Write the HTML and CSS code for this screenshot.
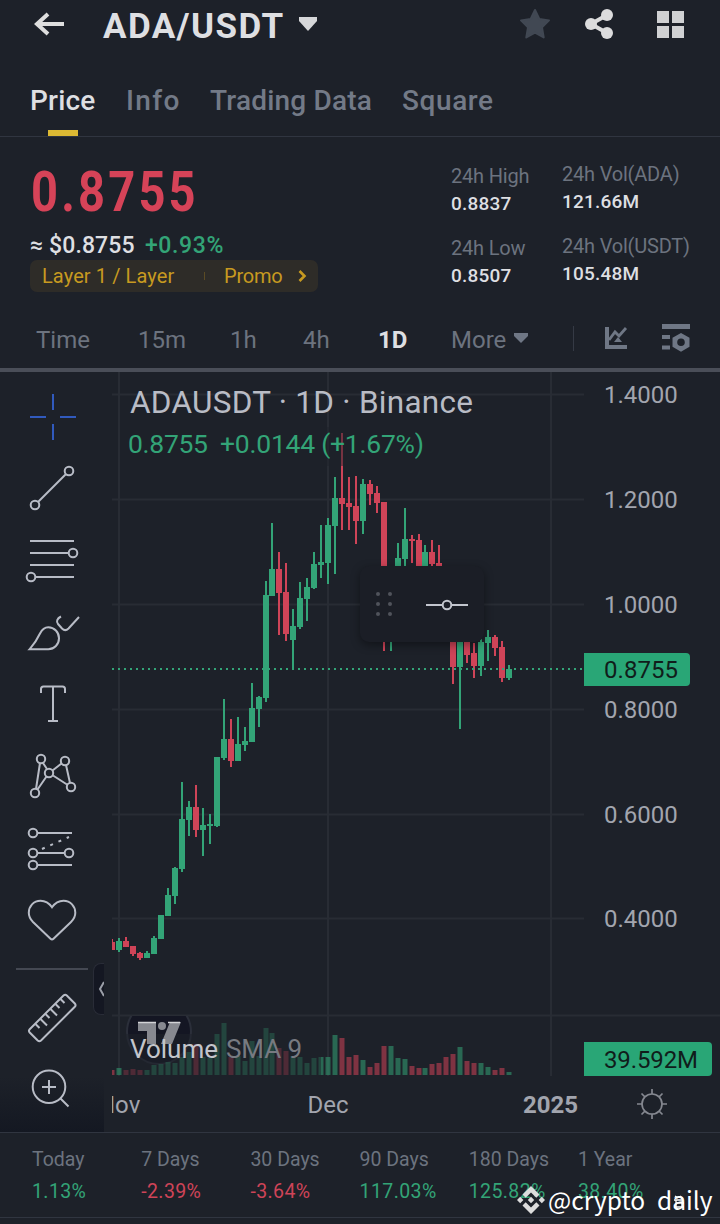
FILE: index.html
```html
<!DOCTYPE html>
<html lang="en">
<head>
  <meta charset="UTF-8">
  <meta name="viewport" content="width=device-width, initial-scale=1.0">
  <title>ADA/USDT</title>
  <link rel="stylesheet" href="styles.css">
</head>
<body>
  <header class="topbar">
    <svg class="back" width="32" height="26" viewBox="0 0 32 26"><path d="M15 3L4 13l11 10M4 13h27" fill="none" stroke="#dedede" stroke-width="4"/></svg>
    <h1>ADA/USDT</h1>
    <svg class="caret" width="20" height="16" viewBox="0 0 20 16"><path d="M1 1h18v4l-9 10L1 5z" fill="#d6d7d9"/></svg>
    <div class="actions">
      <svg width="32" height="32" viewBox="0 0 32 32"><path d="M16 2l4.300 9 9.700 1.400-7 7 1.700 10L16 24.700 7.300 29.400 9 19.400 2 12.400 11.700 11z" fill="#414853" stroke="#414853" stroke-width="2" stroke-linejoin="round"/></svg>
      <svg width="32" height="32" viewBox="0 0 32 32"><path d="M24 7L8 16l16 9" fill="none" stroke="#dcdcdd" stroke-width="4"/><g fill="#dcdcdd"><circle cx="8" cy="16" r="6"/><circle cx="24" cy="7" r="6"/><circle cx="24" cy="25" r="6"/></g></svg>
      <svg width="32" height="32" viewBox="0 0 32 32"><path d="M3 3h12v12H3zM18 3h12v12H18zM3 18h12v12H3zM18 18h12v12H18z" fill="#d0d1d3"/></svg>
    </div>
  </header>

  <nav class="tabs">
    <span class="tab active">Price</span>
    <span class="tab info">Info</span>
    <span class="tab">Trading Data</span>
    <span class="tab square">Square</span>
  </nav>

  <section class="ticker">
    <div class="price-box">
      <div class="price">0.8755</div>
      <div class="sub"><span class="usd">≈ $0.8755</span><span class="change up">+0.93%</span></div>
      <div class="promo">
        <span class="layer">Layer 1 / Layer</span>
        <i></i>
        <span class="link">Promo</span>
        <svg width="9" height="12" viewBox="0 0 9 12"><path d="M1.500 1l5 5-5 5" fill="none" stroke="#c79a20" stroke-width="2.600"/></svg>
      </div>
    </div>
    <dl class="stats">
      <div><dt>24h High</dt><dd>0.8837</dd></div>
      <div><dt>24h Low</dt><dd>0.8507</dd></div>
    </dl>
    <dl class="stats vol">
      <div><dt>24h Vol(ADA)</dt><dd>121.66M</dd></div>
      <div><dt>24h Vol(USDT)</dt><dd>105.48M</dd></div>
    </dl>
  </section>

  <nav class="intervals">
    <span>Time</span>
    <span>15m</span>
    <span>1h</span>
    <span>4h</span>
    <span class="active">1D</span>
    <span class="more">More <svg width="14" height="12" viewBox="0 0 14 12"><path d="M0 1h14v3l-7 7-7-7z" fill="#6f7785"/></svg></span>
    <i></i>
    <svg width="26" height="26" viewBox="0 0 26 26"><path d="M4 2v20h20" fill="none" stroke="#6f7785" stroke-width="4"/><path d="M6 15l6-8 4 4 7-8" fill="none" stroke="#6f7785" stroke-width="2.800"/><path d="M11 17l4-5 4 5z" fill="#6f7785"/></svg>
    <svg class="settings" width="30" height="30" viewBox="0 0 30 30"><g fill="#6f7785"><path d="M1 1h28v5H1zM1 12h8v4H1zM1 22.500h8v4H1z"/><path fill-rule="evenodd" d="M20 10l8.500 4.800v9L20 28.700l-8.500-4.900v-9zM20 15.500a3.800 3.800 0 100 7.600 3.800 3.800 0 000-7.600z"/></g></svg>
  </nav>

  <main class="chart">
    <aside class="tools">
      <svg viewBox="0 0 72 72" class="tool selected"><path d="M37 13v16M37 43v16M14 36h16M44 36h16"/></svg>
      <svg viewBox="0 0 72 72" class="tool"><path d="M22 49L50 21"/><circle cx="53" cy="18" r="4.300"/><circle cx="19" cy="52" r="4.300"/></svg>
      <svg viewBox="0 0 72 72" class="tool"><path d="M14 16h44M14 28h39M14 40h44M20 52h38"/><circle cx="57" cy="28" r="4.300"/><circle cx="15" cy="52" r="4.300"/></svg>
      <svg viewBox="0 0 72 72" class="tool"><path d="M13.500 52.300C19 46 21 43 24 36.500c2-4 5-6.200 8.300-6.200 6 0 10.700 5 10.700 11s-4.700 11-10.700 11z"/><path d="M45 19.500c-4 2-5 5-3 7.500l4 4.500c2 2 4.500 2 6.500 0L63 20"/></svg>
      <svg viewBox="0 0 72 72" class="tool"><path d="M25 24v-4q0-2.500 2.500-2.500h19q2.500 0 2.500 2.500v4M37 17.500V52M32 52h10"/></svg>
      <svg viewBox="0 0 72 72" class="tool"><path d="M24 22l-4 26M27 22l4 6M21.500 48.500L30.500 35.500M36.500 29.500l9-7M50 24l4 18M37 34.500l14 9"/><circle cx="25" cy="18" r="4.200"/><circle cx="49" cy="20" r="4.200"/><circle cx="33" cy="32" r="4.200"/><circle cx="55" cy="46" r="4.200"/><circle cx="19" cy="52" r="4.200"/></svg>
      <svg viewBox="0 0 72 72" class="tool"><path d="M21.500 20H56M21.500 40h27M21.500 52H56"/><path d="M26 36l27-12" stroke-dasharray="3 6"/><circle cx="17" cy="20" r="4.300"/><circle cx="17" cy="40" r="4.300"/><circle cx="53" cy="40" r="4.300"/><circle cx="17" cy="52" r="4.300"/></svg>
      <svg viewBox="0 0 72 72" class="tool"><path d="M36 22.300c-3-4.300-7-6.500-11.500-6.500-7 0-11.700 5.400-11.700 12 0 3.700 1.500 6.500 4.200 9.200l17.500 16.700q1.500 1.500 3 0L55 37c2.800-2.700 4.300-5.500 4.300-9.200 0-6.600-4.800-12-11.800-12-4.500 0-8.500 2.200-11.500 6.500z"/></svg>
      <hr>
      <svg viewBox="0 0 72 72" class="tool"><path d="M47.500 14.500q1.700-1.500 3.300 0l8 8q1.500 1.700 0 3.300L25 59.500q-1.700 1.500-3.300 0l-8-8q-1.500-1.700 0-3.300z"/><path d="M19.500 43l4 4M24.500 38l6.500 6.500M29.500 33l4 4M34.500 28l6.500 6.500M39.500 23l4 4M44.500 18l4 4"/></svg>
      <svg viewBox="0 0 72 72" class="tool"><circle cx="33" cy="33.700" r="16.300"/><path d="M26 34h14M33 27v14M44.500 45.500l8 8"/></svg>
      <div class="collapse"><svg width="6" height="16" viewBox="0 0 6 16"><path d="M6 1L2 8l4 7" fill="none" stroke="#9b9fa8" stroke-width="2"/></svg></div>
    </aside>

    <svg class="plot" width="616" height="760" viewBox="104 372 616 760">
      <defs>
        <clipPath id="pane"><rect x="112" y="372" width="474" height="704"/></clipPath>
        <clipPath id="axis"><rect x="112" y="1080" width="470" height="50"/></clipPath>
        <clipPath id="badge"><rect x="120" y="1016" width="80" height="60"/></clipPath>
      </defs>
      <path class="grid" d="M112 394.500h472M112 499.500h472M112 604.500h472M112 709.500h472M112 814.500h472M112 918.500h472M112 1015.500h608M119 372v704M328 372v704M551 372v704"/>
      <g clip-path="url(#badge)"><circle cx="159" cy="1032" r="32" fill="#141623" stroke="#2b2f3a" stroke-width="2"/></g>
      <g id="volume" clip-path="url(#pane)"></g>
      <g id="candles" clip-path="url(#pane)"></g>
      <rect x="122" y="427" width="310" height="39" class="shade"/>
      <rect x="122" y="1034" width="199" height="42" class="shade"/>
      <rect x="192" y="1018" width="129" height="16" class="shade"/>
      <path d="M138 1022h18v22h-9v-13h-9zM170 1022h11l-9 22h-11z" fill="#878990"/>
      <path d="M138 1022.500h18M168 1022.500h12" stroke="#d2d3d6" stroke-width="1.500"/>
      <circle cx="162" cy="1026" r="4" fill="#878990"/>
      <path d="M112 669h472" class="last-line"/>
      <g class="label">
        <text x="130" y="413" font-size="31.500" textLength="343" fill="#b9bcc5">ADAUSDT · 1D · Binance</text>
        <text x="128" y="453" font-size="26.500" textLength="80" fill="#33a477">0.8755</text>
        <text x="220" y="453" font-size="26.500" textLength="204" fill="#33a477">+0.0144 (+1.67%)</text>
        <text x="130" y="1058" font-size="26" textLength="88" fill="#c3c5cb">Volume</text>
        <text x="226" y="1058" font-size="26" textLength="76" fill="#777a81">SMA 9</text>
      </g>
      <g class="axis">
        <text x="604" y="403">1.4000</text>
        <text x="604" y="508">1.2000</text>
        <text x="604" y="613">1.0000</text>
        <text x="604" y="718">0.8000</text>
        <text x="604" y="823">0.6000</text>
        <text x="604" y="927">0.4000</text>
        <text x="98" y="1113" clip-path="url(#axis)">Nov</text>
        <text x="307.500" y="1113">Dec</text>
        <text x="523" y="1113" font-weight="700">2025</text>
      </g>
      <path d="M584 653h102q4 0 4 4v25q0 4-4 4H584z" fill="#29a676"/>
      <text x="604" y="678" class="tag" textLength="74">0.8755</text>
      <path d="M584 1042h124q4 0 4 4v26q0 4-4 4H584z" fill="#29a676"/>
      <text x="604" y="1068" class="tag" textLength="94">39.592M</text>
      <g fill="none" stroke="#858890" stroke-width="1.700">
        <circle cx="652" cy="1104" r="10"/>
        <path d="M652 1089v5M652 1114v5M637 1104h5M662 1104h5M641.500 1093.500l3.500 3.500M659 1111l3.500 3.500M662.500 1093.500L659 1097M645 1111l-3.500 3.500"/>
      </g>
    </svg>

    <div class="floating">
      <div class="drag"><i></i><i></i><i></i><i></i><i></i><i></i></div>
      <svg width="42" height="12" viewBox="0 0 42 12"><path d="M0 6h16.500M25.500 6H42" stroke="#c3c6ce" stroke-width="2"/><circle cx="21" cy="6" r="4.300" fill="none" stroke="#c3c6ce" stroke-width="2"/></svg>
    </div>
  </main>

  <footer class="performance">
    <div><span>Today</span><b class="up">1.13%</b></div>
    <div><span>7 Days</span><b class="down">-2.39%</b></div>
    <div><span>30 Days</span><b class="down">-3.64%</b></div>
    <div><span>90 Days</span><b class="up">117.03%</b></div>
    <div><span>180 Days</span><b class="up">125.82%</b></div>
    <div><span>1 Year</span><b class="up">38.40%</b></div>
  </footer>

  <div class="credit">
    <svg width="28" height="28" viewBox="0 0 28 28"><g fill="#dcdcdc"><path d="M14 0l8.500 8.500-3.200 3.200L14 6.400l-5.300 5.300-3.200-3.200zM14 28l8.500-8.500-3.200-3.200-5.300 5.300-5.300-5.300-3.200 3.200z"/><path d="M14 10.800l3.200 3.200-3.200 3.200-3.200-3.200zM3.200 10.800L6.400 14l-3.200 3.200L0 14zM24.800 10.800L28 14l-3.200 3.200-3.200-3.200z"/></g></svg>
    <span class="handle">@crypto</span>
    <span class="daily">daily<svg width="12" height="14" viewBox="0 0 12 14"><path d="M2 1l3 2M7 1l3 3M1 5h9M3 8h8M1 12h10M3 5v8M9 7v6" stroke="#fff" stroke-width="1.300"/></svg></span>
  </div>

  <script src="script.js"></script>
</body>
</html>
```

FILE: styles.css
```css
* {
  box-sizing: border-box;
}
body {
  margin: 0;
  width: 720px;
  height: 1224px;
  overflow: hidden;
  position: relative;
  background: #1d2129;
  color: #dedfe2;
  font-family: Roboto, "Liberation Sans", sans-serif;
}
svg {
  display: block;
  flex: none;
}
.up {
  color: #33a477;
}
.down {
  color: #cf4458;
}

/* header */
.topbar {
  display: flex;
  align-items: center;
  height: 50px;
  padding: 0 34px 2px;
}
.topbar h1 {
  width: 195px;
  margin: 5px 0 0 38px;
  font-size: 35px;
  line-height: 44px;
  font-weight: 700;
  letter-spacing: 1.400px;
}
.back {
  margin-left: -1px;
}
.actions {
  display: flex;
  gap: 32px;
  margin-left: auto;
}
.actions svg:last-child {
  margin-left: 7px;
}
.tabs {
  display: grid;
  grid-template-columns: 96px 84px 192px 1fr;
  height: 87px;
  padding-left: 30px;
  border-bottom: 1px solid #303540;
}
.tab {
  padding-top: 33px;
  font-size: 28px;
  line-height: 36px;
  font-weight: 500;
  letter-spacing: 0.2px;
  color: #737a87;
}
.tab.info {
  letter-spacing: 1.4px;
}
.tab.square {
  letter-spacing: 0.6px;
}
.tab.active {
  color: #dedfe2;
}
.tab.active::after {
  content: "";
  display: block;
  width: 30px;
  height: 6px;
  margin: 11px 0 0 18px;
  background: #dcb933;
}

/* price and 24h stats */
.ticker {
  display: grid;
  grid-template-columns: 421px 111px 1fr;
  height: 173px;
  padding-left: 30px;
}
.price {
  margin: 25px 0 0 1px;
  font-size: 56px;
  line-height: 60px;
  font-weight: 700;
  letter-spacing: 3.8px;
  transform: scaleX(0.84);
  transform-origin: 0 50%;
  color: #d64358;
}
.sub {
  display: flex;
  gap: 11px;
  margin-top: 10px;
  font-size: 23px;
  line-height: 28px;
  font-weight: 500;
}
.usd {
  width: 104px;
  white-space: nowrap;
  letter-spacing: 0.1px;
}
.change {
  letter-spacing: 0.6px;
}
.promo {
  display: flex;
  align-items: center;
  width: 288px;
  height: 32px;
  padding-left: 12px;
  border-radius: 7px;
  background: #2e2c28;
  color: #c79a20;
  font-size: 20px;
  letter-spacing: 0.1px;
}
.promo .layer {
  width: 162px;
}
.promo .link {
  width: 58px;
  letter-spacing: -0.2px;
}
.promo i {
  width: 1px;
  height: 8px;
  margin-right: 19px;
  background: #5b4b24;
}
.promo svg {
  margin-left: 16px;
}
.stats {
  margin: 25px 0 0;
  font-size: 20px;
}
.stats.vol {
  margin-top: 23px;
}
.stats div {
  height: 72px;
}
.stats dt {
  line-height: 28px;
  letter-spacing: -0.2px;
  color: #6c737f;
}
.stats dd {
  margin: 0;
  font-size: 19px;
  line-height: 28px;
  letter-spacing: 0.2px;
  font-weight: 500;
}

/* interval picker */
.intervals {
  display: grid;
  grid-template-columns: 102px 92px 73px 75px 73px 122px 30px 58px 1fr;
  align-items: center;
  height: 62px;
  padding: 0 0 2px 36px;
  border-bottom: 4px solid #4a4e58;
  font-size: 24px;
  color: #6c737f;
}
.intervals span {
  padding-top: 3px;
}
.intervals .active {
  color: #dedfe2;
  font-weight: 700;
}
.intervals i {
  width: 1px;
  height: 25px;
  background: #353a45;
}
.more {
  display: flex;
  align-items: center;
  gap: 8px;
}
.more svg {
  margin-bottom: 3px;
}

/* chart */
.chart {
  display: flex;
  position: relative;
  height: 760px;
}
.tools {
  position: relative;
  width: 104px;
  padding: 9px 0 0 16px;
  background: linear-gradient(#1d2129 705px, #141822 760px);
}
.tool {
  width: 72px;
  height: 72px;
  fill: none;
  stroke: #b8bcc6;
  stroke-width: 2;
}
.tool.selected {
  stroke: #315abd;
}
.tools hr {
  width: 72px;
  height: 2px;
  margin: 11px 0;
  border: 0;
  background: #444852;
}
.collapse {
  position: absolute;
  right: 0;
  top: 591px;
  display: flex;
  align-items: center;
  justify-content: flex-end;
  width: 11px;
  height: 52px;
  border: 1px solid #292c37;
  border-right: 0;
  border-radius: 8px 0 0 8px;
  background: #141722;
}
.grid {
  fill: none;
  stroke: #282c34;
  stroke-width: 2;
}
.last-line {
  stroke: #33a477;
  stroke-width: 2;
  stroke-dasharray: 2 4;
}
.shade {
  fill: #1d2129;
  fill-opacity: 0.5;
}
.axis text {
  font-size: 24px;
  fill: #a2a5ae;
}
.tag {
  font-size: 24px;
  fill: #101d1b;
}
.candle.up,
.bar.up {
  fill: #33a477;
}
.candle.down,
.bar.down {
  fill: #cf4458;
}
.bar {
  opacity: 0.55;
}
.floating {
  position: absolute;
  left: 360px;
  top: 194px;
  display: flex;
  align-items: center;
  gap: 34px;
  width: 124px;
  height: 76px;
  padding: 2px 0 0 16px;
  border-radius: 9px;
  background: #1b1e26;
  box-shadow: 0 3px 10px rgba(0, 0, 0, 0.4);
}
.drag {
  display: grid;
  grid-template-columns: 4px 4px;
  gap: 6px 8px;
  margin-top: -2px;
}
.drag i {
  width: 4px;
  height: 4px;
  border-radius: 50%;
  background: #50535b;
}

/* performance strip */
.performance {
  display: grid;
  grid-template-columns: repeat(6, 109.200px);
  height: 86px;
  padding: 11px 0 0 32px;
  border-top: 1px solid #303540;
  border-bottom: 1px solid #303540;
  font-size: 19.500px;
}
.performance span,
.performance b {
  display: block;
  line-height: 32px;
  font-weight: 400;
}
.performance span {
  color: #6c737f;
}
.performance b {
  letter-spacing: 0.400px;
}
.credit {
  position: absolute;
  left: 517px;
  top: 1182px;
  display: flex;
  align-items: center;
  color: #fff;
  font-family: "Noto Sans CJK SC", "Noto Sans", sans-serif;
  font-size: 24.500px;
  line-height: 36px;
}
.handle {
  width: 108px;
  margin-left: 3px;
}
.daily {
  position: relative;
  margin-left: 1px;
}
.daily svg {
  position: absolute;
  left: 16px;
  top: 13px;
}
```

FILE: script.js
```js
// x, body top, body bottom, wick top, wick bottom, direction, volume top
const candles = [
  [112, 942, 950, 939, 950, "down", 1070],
  [119, 941, 950, 938, 952, "up", 1068],
  [126, 941, 947, 937, 947, "down", 1070],
  [133, 946, 954, 946, 956, "down", 1069],
  [140, 953, 958, 952, 960, "down", 1070],
  [147, 953, 958, 951, 958, "up", 1070],
  [154, 938, 954, 936, 954, "up", 1065],
  [161, 915, 939, 915, 939, "up", 1064],
  [168, 895, 916, 888, 916, "up", 1062],
  [175, 868, 896, 867, 904, "up", 1063],
  [182, 819, 869, 782, 872, "up", 1057],
  [189, 807, 820, 801, 836, "up", 1052],
  [196, 807, 830, 785, 837, "down", 1044],
  [203, 825, 830, 808, 856, "up", 1057],
  [210, 824, 826, 814, 844, "up", 1058],
  [217, 757, 826, 757, 827, "up", 1034],
  [224, 739, 758, 699, 760, "up", 1023],
  [231, 739, 761, 719, 767, "down", 1057],
  [238, 744, 761, 717, 761, "up", 1056],
  [245, 741, 745, 727, 751, "up", 1061],
  [252, 708, 742, 683, 742, "up", 1041],
  [259, 697, 709, 696, 727, "up", 1056],
  [266, 595, 698, 581, 702, "up", 1028],
  [272, 569, 596, 523, 596, "up", 1033],
  [279, 569, 593, 552, 635, "down", 1048],
  [286, 592, 634, 563, 641, "down", 1051],
  [293, 626, 640, 609, 670, "up", 1056],
  [300, 598, 627, 582, 629, "up", 1057],
  [307, 587, 599, 578, 621, "up", 1063],
  [314, 564, 588, 552, 589, "up", 1058],
  [321, 562, 565, 525, 578, "up", 1057],
  [328, 525, 563, 518, 584, "up", 1057],
  [335, 498, 526, 477, 574, "up", 1035],
  [342, 498, 504, 433, 530, "down", 1038],
  [349, 503, 507, 477, 530, "down", 1057],
  [356, 506, 521, 476, 544, "down", 1055],
  [363, 484, 521, 479, 534, "up", 1060],
  [370, 484, 494, 480, 505, "down", 1067],
  [377, 493, 503, 486, 513, "down", 1063],
  [384, 502, 590, 502, 651, "down", 1046],
  [391, 590, 620, 580, 651, "up", 1046],
  [398, 558, 600, 543, 610, "up", 1058],
  [405, 539, 559, 508, 566, "up", 1059],
  [412, 539, 541, 535, 563, "down", 1066],
  [419, 540, 570, 534, 570, "down", 1068],
  [425, 552, 570, 545, 570, "up", 1068],
  [432, 552, 564, 540, 566, "down", 1064],
  [439, 563, 590, 545, 590, "down", 1063],
  [446, 580, 620, 580, 620, "down", 1057],
  [453, 620, 667, 620, 684, "down", 1054],
  [460, 630, 667, 630, 729, "up", 1047],
  [467, 630, 655, 630, 663, "down", 1061],
  [474, 653, 666, 643, 678, "down", 1063],
  [481, 642, 666, 639, 676, "up", 1063],
  [488, 637, 643, 630, 661, "up", 1067],
  [495, 637, 648, 635, 656, "down", 1070],
  [502, 647, 678, 641, 682, "down", 1068],
  [509, 669, 678, 665, 680, "up", 1072]
];

const candleLayer = document.getElementById("candles");
const volumeLayer = document.getElementById("volume");

candles.forEach(([x, top, bottom, high, low, dir, vol]) => {
  candleLayer.innerHTML += `<path class="candle ${dir}" d="M${x - 3} ${top}h6v${bottom - top}h-6zM${x - 1} ${high}h2v${low - high}h-2z"/>`;
  volumeLayer.innerHTML += `<rect class="bar ${dir}" x="${x - 2.5}" y="${vol}" width="5" height="${1075 - vol}"/>`;
});
```
